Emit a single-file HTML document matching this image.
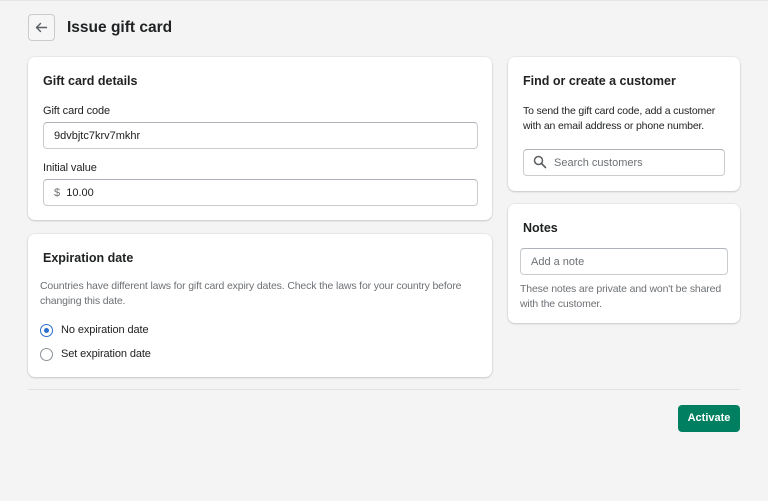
<!DOCTYPE html>
<html><head><style>
*{box-sizing:border-box;margin:0;padding:0}
body{width:768px;height:501px;background:#f4f4f4;font-family:"Liberation Sans",sans-serif;color:#202223;position:relative;overflow:hidden;font-size:11px}
.a{position:absolute}
.card{position:absolute;background:#fff;border-radius:7px;box-shadow:0 0 0 1px rgba(0,0,0,.04),0 1px 2px rgba(0,0,0,.15)}
h2{position:absolute;font-size:12.5px;font-weight:bold;color:#202223}
.lbl{position:absolute;font-size:11px;color:#202223;letter-spacing:-.1px}
.inp{position:absolute;border:1px solid #c9cccf;border-top-color:#aeb4b9;border-radius:4px;height:27px;font-size:11px;line-height:26px;padding-left:10px;background:#fff}
.txt{position:absolute;font-size:10.5px;color:#6d7175;line-height:15px;letter-spacing:-.15px}
.radio{position:absolute;width:13px;height:13px;border-radius:50%;border:1.5px solid #8c9196}
</style></head><body>
<div class="a" style="left:0;top:0;width:768px;height:1px;background:#e4e4e4"></div>
<div class="a" style="left:28px;top:14px;width:27px;height:27px;border:1px solid #c9cccf;border-radius:4px;background:#f6f6f7">
<svg width="25" height="25" viewBox="0 0 25 25" style="position:absolute;left:0;top:0"><path d="M7.5 12.5h10M7.5 12.5l4-4M7.5 12.5l4 4" stroke="#5c5f62" stroke-width="1.4" fill="none" stroke-linecap="round"/></svg></div>
<div class="a" style="left:67px;top:19px;font-size:15.5px;font-weight:bold">Issue gift card</div>

<div class="card" style="left:28px;top:57px;width:464px;height:163px">
<h2 style="left:15px;top:17px">Gift card details</h2>
<div class="lbl" style="left:15px;top:48px">Gift card code</div>
<div class="inp" style="left:15px;top:65px;width:435px">9dvbjtc7krv7mkhr</div>
<div class="lbl" style="left:15px;top:105px">Initial value</div>
<div class="inp" style="left:15px;top:122px;width:435px"><span style="color:#6d7175">$</span>&nbsp; 10.00</div>
</div>

<div class="card" style="left:28px;top:234px;width:464px;height:143px">
<h2 style="left:15px;top:17px">Expiration date</h2>
<div class="txt" style="left:12px;top:45px;width:450px">Countries have different laws for gift card expiry dates. Check the laws for your country before changing this date.</div>
<div class="radio" style="left:12px;top:90px;border-color:#2c6ecb"><div style="position:absolute;left:2.5px;top:2.5px;width:5px;height:5px;border-radius:50%;background:#2c6ecb"></div></div>
<div class="lbl" style="left:33px;top:90px">No expiration date</div>
<div class="radio" style="left:12px;top:114px"></div>
<div class="lbl" style="left:33px;top:114px">Set expiration date</div>
</div>

<div class="card" style="left:508px;top:57px;width:232px;height:134px">
<h2 style="left:15px;top:17px">Find or create a customer</h2>
<div class="txt" style="left:15px;top:47px;width:205px;color:#202223">To send the gift card code, add a customer with an email address or phone number.</div>
<div class="inp" style="left:15px;top:92px;width:202px;padding-left:30px;color:#6d7175">Search customers</div>
<svg class="a" style="left:25px;top:98px" width="14" height="14" viewBox="0 0 14 14"><circle cx="5.5" cy="5.5" r="4" stroke="#5c5f62" stroke-width="1.5" fill="none"/><path d="M8.5 8.5l4 4" stroke="#5c5f62" stroke-width="1.6" stroke-linecap="round"/></svg>
</div>

<div class="card" style="left:508px;top:204px;width:232px;height:119px">
<h2 style="left:15px;top:17px">Notes</h2>
<div class="inp" style="left:12px;top:44px;width:208px;color:#6d7175">Add a note</div>
<div class="txt" style="left:12px;top:78px;width:215px">These notes are private and won't be shared with the customer.</div>
</div>

<div class="a" style="left:28px;top:389px;width:712px;height:1px;background:#e1e3e5"></div>
<div class="a" style="left:678px;top:405px;width:62px;height:27px;background:#008060;border-radius:4px;color:#fff;font-weight:bold;font-size:11px;line-height:27px;text-align:center">Activate</div>
</body></html>
